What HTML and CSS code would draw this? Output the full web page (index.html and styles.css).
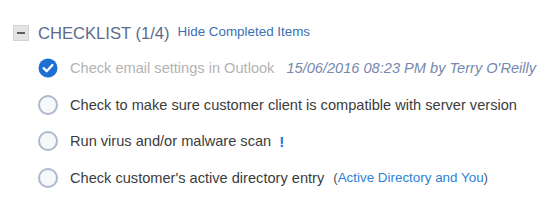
FILE: index.html
```html
<!DOCTYPE html>
<html>
<head>
<meta charset="utf-8">
<link rel="stylesheet" href="styles.css">
</head>
<body>
<div class="checklist">
  <div class="header">
    <span class="toggle"><span class="minus"></span></span>
    <span class="title">CHECKLIST (1/4)</span>
    <a class="hide-link">Hide Completed Items</a>
  </div>
  <ul class="items">
    <li class="item done">
      <svg class="check" width="20" height="20" viewBox="0 0 20 20">
        <circle cx="10" cy="10" r="9.5" fill="#1d6fd2"/>
        <path d="M5.6 10.2 L8.7 13.2 L14.4 7" fill="none" stroke="#fff" stroke-width="2.3" stroke-linecap="round" stroke-linejoin="round"/>
      </svg>
      <span class="label">Check email settings in Outlook</span>
      <span class="meta">15/06/2016 08:23 PM by Terry O'Reilly</span>
    </li>
    <li class="item">
      <span class="circle"></span>
      <span class="label">Check to make sure customer client is compatible with server version</span>
    </li>
    <li class="item">
      <span class="circle"></span>
      <span class="label">Run virus and/or malware scan</span>
      <span class="alert">!</span>
    </li>
    <li class="item">
      <span class="circle"></span>
      <span class="label">Check customer's active directory entry</span>
      <span class="ref">(<a class="ref-link">Active Directory and You</a>)</span>
    </li>
  </ul>
</div>
</body>
</html>
```

FILE: styles.css
```css
html, body {
  margin: 0;
  padding: 0;
  background: #ffffff;
}
body {
  font-family: "Liberation Sans", Arial, sans-serif;
  width: 544px;
  height: 202px;
  overflow: hidden;
}
.checklist {
  padding: 25px 0 0 13px;
}
.header {
  display: flex;
  align-items: center;
  height: 16px;
}
.toggle {
  width: 14px;
  height: 14px;
  background: #e4e4e4;
  border: 1px solid #d2d2d2;
  display: flex;
  align-items: center;
  justify-content: center;
  box-sizing: content-box;
}
.minus {
  width: 8px;
  height: 2px;
  background: #5e5e5e;
}
.title {
  margin-left: 9px;
  font-size: 16.6px;
  color: #5b6b8b;
  line-height: 17px;
}
.hide-link {
  margin-left: 8px;
  font-size: 13.4px;
  color: #3b6fb3;
  line-height: 14px;
  position: relative;
  top: -1px;
}
.items {
  list-style: none;
  margin: 0;
  padding: 0 0 0 25px;
  margin-top: 9px;
}
.item {
  display: flex;
  align-items: center;
  height: 36.5px;
  font-size: 14.6px;
  color: #3c3c3c;
  white-space: nowrap;
}
.check, .circle {
  flex: none;
  width: 20px;
  height: 20px;
  margin-right: 12px;
}
.circle {
  box-sizing: border-box;
  border: 2px solid #adb8ca;
  border-radius: 50%;
  background: #f6f8fb;
}
.done .label {
  color: #b3b3b3;
}
.meta {
  margin-left: 12px;
  font-style: italic;
  color: #7688ae;
}
.alert {
  margin-left: 8px;
  color: #1a73e8;
  font-weight: bold;
  font-size: 15px;
}
.ref {
  margin-left: 9px;
  color: #555;
  font-size: 13.4px;
}
.ref-link {
  color: #2e7fd6;
}
```
